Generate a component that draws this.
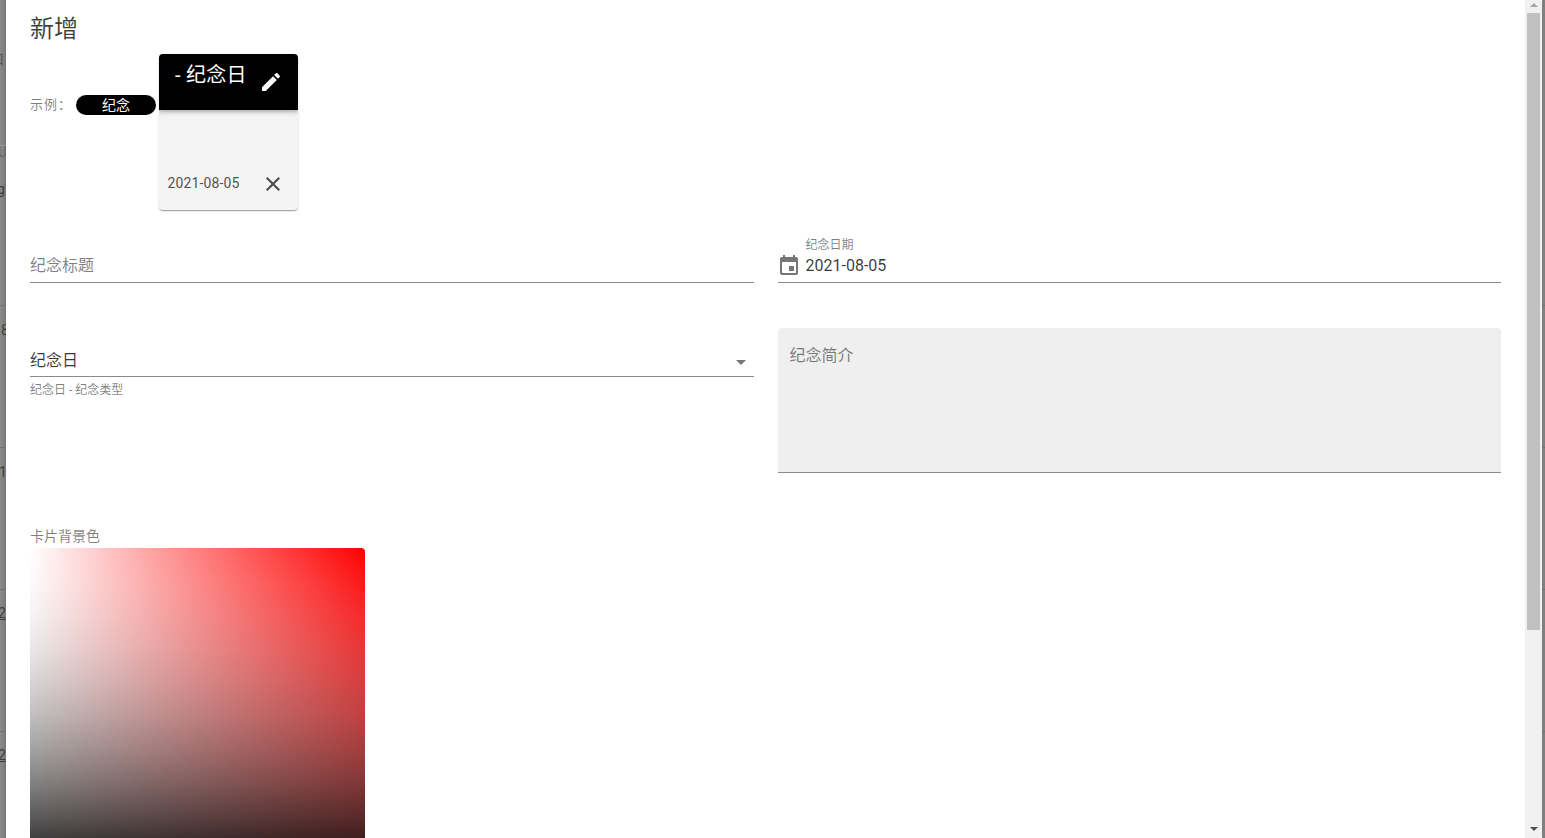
<div class="page">
	<div class="backdrop left">
		<span class="frag box" style="top: 51px">口</span>
		<i class="dot"></i>
		<i class="frag-box"></i>
		<span class="frag faint" style="top: 144px; left: -2px">U</span>
		<span class="frag" style="top: 181px; left: -3px">g</span>
		<i class="rule" style="top: 305px"></i>
		<span class="frag" style="top: 322px; left: 1px">8</span>
		<i class="rule" style="top: 447px"></i>
		<span class="frag" style="top: 464px; left: -1px">1</span>
		<i class="rule" style="top: 589px"></i>
		<span class="frag under" style="top: 605px; left: -2px">2</span>
		<i class="rule" style="top: 731px"></i>
		<span class="frag under" style="top: 747px; left: -2px">2</span>
	</div>

	<div class="dialog">
		<div class="content">
			<h2>新增</h2>

			<div class="sample">
				<span class="sample-label">示例：</span>
				<span class="chip">纪念</span>
				<div class="card">
					<div class="card-head">
						<span class="card-title">- 纪念日</span>
						<svg class="pencil" viewBox="0 0 24 24" width="24" height="24"><path d="M20.71 7.04c.39-.39.39-1.04 0-1.41l-2.34-2.34c-.37-.39-1.02-.39-1.41 0l-1.84 1.83 3.75 3.75M3 17.25V21h3.75L17.81 9.93l-3.75-3.75L3 17.25z" /></svg>
					</div>
					<div class="card-foot">
						<span>2021-08-05</span>
						<svg viewBox="0 0 24 24" width="24" height="24"><path d="M19 6.41L17.59 5 12 10.59 6.41 5 5 6.41 10.59 12 5 17.59 6.41 19 12 13.41 17.59 19 19 17.59 13.41 12 19 6.41z" /></svg>
					</div>
				</div>
			</div>

			<div class="form">
				<div class="field">
					<div class="line"><span class="placeholder">纪念标题</span></div>
				</div>
				<div class="field">
					<div class="line date">
						<svg viewBox="0 0 24 24" width="24" height="24"><path d="M19,19H5V8H19M16,1V3H8V1H6V3H5C3.89,3 3,3.89 3,5V19A2,2 0 0,0 5,21H19A2,2 0 0,0 21,19V5C21,3.89 20.1,3 19,3H18V1M17,12H12V17H17V12Z" /></svg>
						<div class="date-text">
							<span class="float">纪念日期</span>
							<span class="value">2021-08-05</span>
						</div>
					</div>
				</div>
				<div class="field select">
					<div class="line">
						<span class="value">纪念日</span>
						<i class="caret"></i>
					</div>
					<p class="hint">纪念日 - 纪念类型</p>
				</div>
				<div class="field area">
					<span class="placeholder">纪念简介</span>
				</div>
			</div>

			<div class="color">
				<label for="picker">卡片背景色</label>
				<div id="picker" class="canvas"></div>
			</div>
		</div>

		<div class="scrollbar">
			<i class="arrow up"></i>
			<div class="track"><div class="thumb"></div></div>
			<i class="arrow down"></i>
		</div>
	</div>

	<div class="backdrop right">
		<i class="rule" style="top: 305px"></i>
		<i class="rule" style="top: 447px"></i>
		<i class="rule" style="top: 589px"></i>
		<i class="rule" style="top: 731px"></i>
	</div>
</div>

<style>
	:global(body) {
		margin: 0;
		overflow: hidden;
	}
	.page {
		display: flex;
		height: 838px;
		font-family: Roboto, "Noto Sans CJK SC", sans-serif;
		color: rgba(0, 0, 0, 0.87);
		overflow: hidden;
	}
	.backdrop {
		position: relative;
		background: #808080;
		overflow: hidden;
	}
	.backdrop.left {
		width: 6px;
		background: linear-gradient(to right, #8a8a8a, #787878);
	}
	.backdrop.right {
		width: 3px;
	}
	.frag {
		position: absolute;
		font-size: 14px;
		line-height: 16px;
		color: #3c3c3c;
	}
	.frag.box {
		left: -10px;
		color: #555;
	}
	.frag.faint {
		color: #666;
	}
	.frag.under {
		text-decoration: underline;
	}
	.frag-box {
		position: absolute;
		top: 145px;
		left: 0;
		right: 0;
		height: 1px;
		background: #999;
	}
	.dot {
		position: absolute;
		top: 112px;
		left: 5px;
		width: 1px;
		height: 1px;
		background: #a06a40;
	}
	.rule {
		position: absolute;
		left: 0;
		right: 0;
		height: 1px;
		background: #707070;
	}
	.dialog {
		flex: 1;
		display: flex;
		min-width: 0;
		background: #fff;
		border-radius: 4px;
		overflow: hidden;
	}
	.content {
		flex: 1;
		min-width: 0;
		padding: 0 24px;
	}
	h2 {
		margin: 0;
		padding-top: 13px;
		height: 54px;
		box-sizing: border-box;
		font-size: 24px;
		line-height: 32px;
		font-weight: 400;
		color: rgba(0, 0, 0, 0.75);
	}
	.sample {
		display: flex;
		align-items: flex-start;
		height: 156px;
	}
	.sample-label {
		width: 46px;
		margin-top: 41px;
		font-size: 13px;
		letter-spacing: 1px;
		line-height: 20px;
		white-space: nowrap;
		color: rgba(0, 0, 0, 0.5);
	}
	.chip {
		width: 80px;
		height: 20px;
		margin-top: 41px;
		margin-right: 3px;
		border-radius: 10px;
		background: #000;
		color: #fff;
		font-size: 14px;
		line-height: 20px;
		text-align: center;
	}
	.card {
		width: 139px;
		height: 156px;
		border-radius: 4px;
		background: #f4f4f4;
		box-shadow: 0 2px 1px -1px rgba(0, 0, 0, 0.2), 0 1px 1px rgba(0, 0, 0, 0.14), 0 1px 3px rgba(0, 0, 0, 0.12);
		overflow: hidden;
		display: flex;
		flex-direction: column;
		justify-content: space-between;
	}
	.card-head {
		height: 56px;
		display: flex;
		justify-content: space-between;
		padding: 9px 15px 0 16px;
		box-sizing: border-box;
		background: #000;
		color: #fff;
		box-shadow: 0 2px 4px rgba(0, 0, 0, 0.3);
	}
	.card-title {
		font-size: 20px;
		line-height: 24px;
		letter-spacing: 0.0125em;
	}
	.pencil {
		margin-top: 7px;
		fill: #fff;
	}
	.card-foot {
		display: flex;
		justify-content: space-between;
		align-items: center;
		padding: 0 13.5px 14px 8.5px;
		font-size: 14px;
		letter-spacing: 0.01em;
		color: rgba(0, 0, 0, 0.7);
	}
	.card-foot span {
		margin-bottom: 2px;
	}
	.card-foot svg {
		fill: rgba(0, 0, 0, 0.7);
	}
	.form {
		display: grid;
		grid-template-columns: 1fr 1fr;
		column-gap: 24px;
		padding-top: 18px;
	}
	.line {
		height: 55px;
		box-sizing: border-box;
		display: flex;
		align-items: flex-end;
		padding-bottom: 4px;
		border-bottom: 1px solid #8a8a8a;
		font-size: 16px;
		line-height: 24px;
	}
	.placeholder {
		color: rgba(0, 0, 0, 0.5);
	}
	.value {
		color: rgba(0, 0, 0, 0.78);
	}
	.date svg {
		fill: rgba(0, 0, 0, 0.54);
		margin: 0 4.5px 0 -0.5px;
	}
	.date-text {
		display: flex;
		flex-direction: column;
	}
	.float {
		margin-bottom: 1px;
		font-size: 12px;
		line-height: 16px;
		color: rgba(0, 0, 0, 0.5);
	}
	.select {
		margin-top: 46px;
	}
	.select .line {
		justify-content: space-between;
		height: 48px;
		padding-bottom: 3px;
	}
	.caret {
		width: 0;
		height: 0;
		margin: 0 7.5px 8px 0;
		border-left: 5px solid transparent;
		border-right: 5px solid transparent;
		border-top: 5px solid rgba(0, 0, 0, 0.54);
	}
	.hint {
		margin: 5px 0 0;
		font-size: 12px;
		line-height: 16px;
		color: rgba(0, 0, 0, 0.5);
	}
	.area {
		margin-top: 45px;
		height: 145px;
		box-sizing: border-box;
		padding: 16px 12px 0;
		background: #efefef;
		border-radius: 4px 4px 0 0;
		border-bottom: 1px solid #8a8a8a;
		font-size: 16px;
		line-height: 24px;
	}
	.color {
		padding-top: 55px;
	}
	.color label {
		display: block;
		font-size: 14px;
		line-height: 16px;
		height: 20px;
		color: rgba(0, 0, 0, 0.5);
	}
	/* white-to-black value ramp: the stops keep the grey that a canvas gradient gives */
	.canvas {
		width: 335px;
		height: 335px;
		border-radius: 4px 4px 0 0;
		background:
			linear-gradient(
				to bottom,
				rgba(255, 255, 255, 0) 0%,
				rgba(230, 230, 230, 0.1) 10%,
				rgba(204, 204, 204, 0.2) 20%,
				rgba(179, 179, 179, 0.3) 30%,
				rgba(153, 153, 153, 0.4) 40%,
				rgba(128, 128, 128, 0.5) 50%,
				rgba(102, 102, 102, 0.6) 60%,
				rgba(77, 77, 77, 0.7) 70%,
				rgba(51, 51, 51, 0.8) 80%,
				rgba(26, 26, 26, 0.9) 90%,
				rgba(0, 0, 0, 1) 100%
			),
			linear-gradient(to right, #fff, #f00);
	}
	.scrollbar {
		width: 17px;
		flex: none;
		display: flex;
		flex-direction: column;
		align-items: center;
		background: #f1f1f1;
	}
	.arrow {
		flex: none;
		width: 0;
		height: 0;
		border-left: 4px solid transparent;
		border-right: 4px solid transparent;
	}
	.arrow.up {
		margin: 3px 0 6px;
		border-bottom: 4px solid #a3a3a3;
	}
	.arrow.down {
		margin: 0 0 7px;
		border-top: 4px solid #505050;
	}
	.track {
		flex: 1;
		width: 100%;
		padding: 0 2px;
		box-sizing: border-box;
	}
	.thumb {
		height: 617px;
		background: #c1c1c1;
	}
</style>
